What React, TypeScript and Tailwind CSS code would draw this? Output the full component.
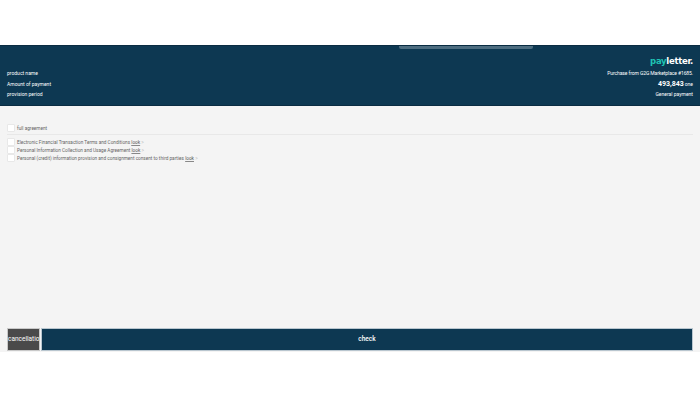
import React from 'react';

const terms = [
  'Electronic Financial Transaction Terms and Conditions',
  'Personal Information Collection and Usage Agreement',
  'Personal (credit) information provision and consignment consent to third parties',
];

const Check = () => <span className="w-[8px] h-[8px] bg-white border border-[#e8e8e8] rounded-[1px] shrink-0" />;

const App: React.FC = () => {
  return (
    <div className="w-[700px] h-[400px] bg-white flex flex-col overflow-hidden font-['Roboto','Liberation_Sans',sans-serif]">
      <div className="h-[45px] shrink-0" />

      {/* Header */}
      <div className="relative h-[61px] shrink-0 bg-[#0d3852] border-t border-b border-[#0a2c42] px-[7px] flex flex-col text-white text-[5px]">
        <div className="absolute left-[399px] top-0 w-[134px] h-[3px] bg-[#4d6d80] rounded-b-[2px]" />
        <div className="flex justify-end h-[20px] items-end pb-[1px]">
          <span className="text-[8.5px] leading-none font-bold font-['DejaVu_Sans',sans-serif] tracking-[-0.3px]">
            <span className="text-[#1fc4b4]">pay</span>letter.
          </span>
        </div>
        <div className="flex justify-between items-center h-[11px] mt-[2px]">
          <span>product name</span>
          <span className="tracking-[-0.1px]">Purchase from G2G Marketplace #1685.</span>
        </div>
        <div className="flex justify-between items-center h-[10.5px]">
          <span>Amount of payment</span>
          <span className="flex items-baseline gap-[1px]">
            <span className="text-[7px] font-bold">493,843</span> one
          </span>
        </div>
        <div className="flex justify-between items-center h-[11px]">
          <span>provision period</span>
          <span>General payment</span>
        </div>
      </div>

      {/* Agreements */}
      <div className="flex-1 bg-[#f4f4f4] px-[7px] flex flex-col text-[4.7px] text-[#666] min-h-0">
        <div className="flex items-center gap-[2px] pt-[18px] pb-[2px] border-b border-[#e8e8e8]">
          <Check />
          <span className="pt-[1px]">full agreement</span>
        </div>
        <div className="flex flex-col mt-[3px]">
          {terms.map(t => (
            <div key={t} className="flex items-center gap-[2px] h-[8px]">
              <Check />
              <span>
                {t} <span className="underline decoration-[#888] text-[#555]">look</span> <span className="text-[#bbb]">&gt;</span>
              </span>
            </div>
          ))}
        </div>

        <div className="mt-auto flex gap-[1px] h-[23px] mb-[1px]">
          <button className="w-[33px] bg-[#4a4a4a] border border-[#c9c9c9] text-white text-[6.5px] overflow-hidden whitespace-nowrap pt-[1px]">
            cancellatio
          </button>
          <button className="flex-1 bg-[#0d3852] border border-[#b9c6cf] text-white text-[6.5px] font-medium pt-[1px]">
            check
          </button>
        </div>
      </div>

      <div className="h-[48px] shrink-0" />
    </div>
  );
};

export default App;
